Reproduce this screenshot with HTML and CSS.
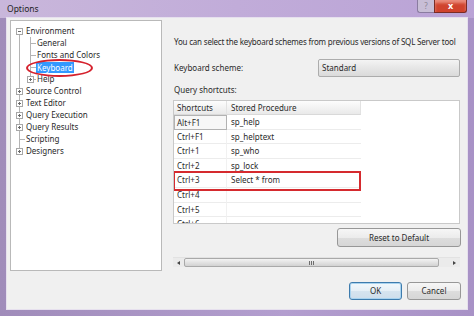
FILE: index.html
```html
<!DOCTYPE html>
<html>
<head>
<meta charset="utf-8">
<link rel="stylesheet" href="styles.css">
</head>
<body>
<div class="window">
  <div class="titlebar">
    <span class="title">Options</span>
    <span class="spacer"></span>
    <span class="cap-help">?</span>
    <span class="cap-close">x</span>
  </div>
  <div class="client">
    <div class="main">
      <div class="tree">
        <div class="node"><span class="g vb"><i class="box minus"></i></span><span class="txt">Environment</span></div>
        <div class="node"><span class="g vf"></span><span class="g vfh"></span><span class="txt">General</span></div>
        <div class="node"><span class="g vf"></span><span class="g vfh"></span><span class="txt">Fonts and Colors</span></div>
        <div class="node"><span class="g vf"></span><span class="g vfh"></span><span class="txt sel">Keyboard</span></div>
        <div class="node"><span class="g vf"></span><span class="g vth"><i class="box plus"></i></span><span class="txt">Help</span></div>
        <div class="node"><span class="g vf"><i class="box plus"></i></span><span class="txt">Source Control</span></div>
        <div class="node"><span class="g vf"><i class="box plus"></i></span><span class="txt">Text Editor</span></div>
        <div class="node"><span class="g vf"><i class="box plus"></i></span><span class="txt">Query Execution</span></div>
        <div class="node"><span class="g vf"><i class="box plus"></i></span><span class="txt">Query Results</span></div>
        <div class="node"><span class="g vfh"></span><span class="txt">Scripting</span></div>
        <div class="node"><span class="g vt"><i class="box plus"></i></span><span class="txt">Designers</span></div>
        <div class="ring"></div>
      </div>
      <div class="pane">
        <div class="desc">You can select the keyboard schemes from previous versions of SQL Server tool</div>
        <div class="scheme-row">
          <span class="lbl">Keyboard scheme:</span>
          <div class="combo">Standard</div>
        </div>
        <div class="lbl qs">Query shortcuts:</div>
        <div class="grid">
          <div class="row head"><div class="c1">Shortcuts</div><div class="c2">Stored Procedure</div></div>
          <div class="row"><div class="c1 cur">Alt+F1</div><div class="c2">sp_help</div></div>
          <div class="row"><div class="c1">Ctrl+F1</div><div class="c2">sp_helptext</div></div>
          <div class="row"><div class="c1">Ctrl+1</div><div class="c2">sp_who</div></div>
          <div class="row"><div class="c1">Ctrl+2</div><div class="c2">sp_lock</div></div>
          <div class="row"><div class="c1">Ctrl+3</div><div class="c2">Select * from</div></div>
          <div class="row"><div class="c1">Ctrl+4</div><div class="c2"></div></div>
          <div class="row"><div class="c1">Ctrl+5</div><div class="c2"></div></div>
          <div class="row"><div class="c1">Ctrl+6</div><div class="c2"></div></div>
          <div class="mark"></div>
        </div>
        <div class="reset-row"><div class="btn reset">Reset to Default</div></div>
        <div class="hscroll">
          <span class="arr"><i class="tri-l"></i></span>
          <span class="thumb"><i class="grip"></i></span>
          <span class="gap"></span>
          <span class="arr"><i class="tri-r"></i></span>
        </div>
      </div>
    </div>
    <div class="footer">
      <div class="btn ok">OK</div>
      <div class="btn cancel">Cancel</div>
    </div>
  </div>
</div>
</body>
</html>
```

FILE: styles.css
```css
* { box-sizing: border-box; }
html, body { margin: 0; padding: 0; }
body {
  width: 474px;
  height: 316px;
  overflow: hidden;
  font-family: "Noto Sans", "Open Sans", sans-serif;
  font-size: 8px;
  color: #2a2a2a;
}
.window {
  width: 474px;
  height: 316px;
  display: flex;
  flex-direction: column;
  background: linear-gradient(to right, #a08cba 0%, #b39ecf 60%, #a892c6 100%);
}
.titlebar {
  height: 18px;
  flex: none;
  display: flex;
  align-items: flex-start;
  padding-left: 7px;
  padding-right: 7px;
  background: linear-gradient(to right, #c9b7db 0%, #c1acd9 50%, #baa3d6 100%);
}
.title {
  line-height: 18px;
  font-size: 8.5px;
  color: #1e1e1e;
}
.spacer { flex: 1; }
.cap-help {
  display: block;
  flex: none;
  width: 17px;
  height: 13px;
  border-left: 1px solid #8a7ca0;
  border-bottom: 1px solid #8a7ca0;
  border-radius: 0 0 0 3px;
  background: #c8bed6;
  color: #8c8597;
  font-size: 8px;
  line-height: 11px;
  text-align: center;
}
.cap-close {
  display: block;
  flex: none;
  width: 33px;
  height: 13px;
  border: 1px solid #7a2c25;
  border-top: 0;
  border-radius: 0 0 3px 0;
  background: #d0432d;
  box-shadow: inset 0 3px 3px rgba(255, 200, 190, 0.55);
  color: #ffffff;
  font-weight: bold;
  font-size: 9px;
  line-height: 11px;
  text-align: center;
}
.client {
  flex: 1;
  margin: 0 7px 7px 7px;
  background: #f0f0f0;
  outline: 1px solid #e6e0ee;
  display: flex;
  flex-direction: column;
}
.main {
  display: flex;
  padding: 2px 0 0 3px;
  height: 253px;
}
.tree {
  position: relative;
  width: 152px;
  height: 251px;
  background: #fff;
  border: 1px solid #b9b9b9;
  padding: 4px 0 0 3px;
}
.node {
  display: flex;
  height: 12px;
  line-height: 12px;
  white-space: nowrap;
}
.g {
  width: 11px;
  height: 12px;
  flex: none;
  display: flex;
  align-items: center;
  justify-content: center;
  background-repeat: no-repeat;
}
.vf { background-image: linear-gradient(#b4b4b4, #b4b4b4); background-position: 5px 0; background-size: 1px 12px; }
.vb { background-image: linear-gradient(#b4b4b4, #b4b4b4); background-position: 5px 6px; background-size: 1px 6px; }
.vt { background-image: linear-gradient(#b4b4b4, #b4b4b4); background-position: 5px 0; background-size: 1px 6px; }
.vfh {
  background-image: linear-gradient(#b4b4b4, #b4b4b4), linear-gradient(#b4b4b4, #b4b4b4);
  background-position: 5px 0, 5px 6px;
  background-size: 1px 12px, 6px 1px;
}
.vth {
  background-image: linear-gradient(#b4b4b4, #b4b4b4), linear-gradient(#b4b4b4, #b4b4b4);
  background-position: 5px 0, 5px 6px;
  background-size: 1px 6px, 6px 1px;
}
.box {
  width: 7px;
  height: 7px;
  border: 1px solid #a7a7a7;
  background-color: #fff;
  background-repeat: no-repeat;
}
.minus {
  background-image: linear-gradient(#6a6a6a, #6a6a6a);
  background-position: 1px 2px;
  background-size: 3px 1px;
}
.plus {
  background-image: linear-gradient(#6a6a6a, #6a6a6a), linear-gradient(#6a6a6a, #6a6a6a);
  background-position: 1px 2px, 2px 1px;
  background-size: 3px 1px, 1px 3px;
}
.txt {
  padding-left: 1px;
  color: #2a2a2a;
}
.txt.sel {
  background: #3399ff;
  color: #fff;
  height: 11px;
  line-height: 11px;
  margin-top: 0.5px;
  padding: 0 1px;
}
.ring {
  position: absolute;
  left: 15px;
  top: 38px;
  width: 67px;
  height: 18px;
  border: 2px solid #d5202c;
  border-radius: 50%;
}
.pane {
  width: 297px;
  margin-left: 3px;
  padding: 16px 2px 0 8px;
  display: flex;
  flex-direction: column;
}
.desc {
  line-height: 12px;
  padding-left: 1px;
  white-space: nowrap;
  letter-spacing: -0.2px;
}
.scheme-row {
  display: flex;
  align-items: center;
  margin-top: 11px;
  height: 18px;
}
.lbl { padding-left: 1px; line-height: 12px; }
.combo {
  margin-left: auto;
  width: 142px;
  height: 18px;
  border: 1px solid #acacac;
  border-radius: 2px;
  background: linear-gradient(#f4f4f4, #e6e6e6 50%, #dadada);
  line-height: 16px;
  padding-left: 3px;
}
.qs { margin-top: 7px; }
.grid {
  position: relative;
  margin-top: 4px;
  height: 124px;
  background: #fff;
  border: 1px solid #c9c9c9;
  overflow: hidden;
}
.row {
  display: flex;
  height: 14.6px;
  line-height: 13.6px;
}
.row .c1 {
  width: 53px;
  padding-left: 3px;
  border-bottom: 1px solid #ececec;
  border-right: 1px solid #f1f1f1;
}
.row .c2 {
  width: 134px;
  padding-left: 4px;
  border-bottom: 1px solid #ececec;
}
.row.head {
  height: 14px;
  line-height: 13px;
}
.row.head .c1, .row.head .c2 {
  background: linear-gradient(#fdfdfd, #f1f1f1 60%, #e9e9e9);
  border-bottom: 1px solid #d9d9d9;
  border-right: 1px solid #e2e2e2;
}
.row.head .c1 { padding-left: 3px; }
.row .c1.cur {
  border: 1px solid #b2b2b2;
  background: #f7f7f7;
  padding-left: 2px;
}
.mark {
  position: absolute;
  left: -1px;
  top: 70px;
  width: 188px;
  height: 20px;
  border: 2px solid #d52a2e;
}
.reset-row {
  display: flex;
  justify-content: flex-end;
  margin-top: 4px;
  margin-right: -1px;
}
.btn {
  height: 19px;
  border: 1px solid #979797;
  border-radius: 3px;
  background: linear-gradient(#f6f6f6, #ececec 50%, #dddddd 51%, #d6d6d6);
  line-height: 17px;
  text-align: center;
  color: #2a2a2a;
}
.reset { width: 124px; }
.hscroll {
  display: flex;
  margin-top: 10px;
  height: 10px;
  background: #ebebeb;
  border-top: 1px solid #e2e2e2;
}
.arr {
  width: 11px;
  display: flex;
  align-items: center;
  justify-content: center;
}
.tri-l, .tri-r {
  width: 0;
  height: 0;
  border-top: 2.5px solid transparent;
  border-bottom: 2.5px solid transparent;
}
.tri-l { border-right: 3px solid #444; }
.tri-r { border-left: 3px solid #444; }
.thumb {
  width: 255px;
  border: 1px solid #a9a9a9;
  border-radius: 2px;
  background: linear-gradient(#f3f3f3, #e2e2e2 50%, #d2d2d2);
  display: flex;
  align-items: center;
  justify-content: center;
}
.grip {
  width: 6px;
  height: 4px;
  background: repeating-linear-gradient(to right, #6e6e6e 0 1px, transparent 1px 2px);
}
.gap { flex: 1; }
.footer {
  display: flex;
  justify-content: flex-end;
  gap: 5px;
  padding: 11px 6px 0 0;
}
.footer .btn { height: 18px; line-height: 16px; }
.ok {
  width: 53px;
  border-color: #3d7bad;
  background: linear-gradient(#f2f8fc, #e6eff6 50%, #d6e4ef 51%, #cfdeeb);
  box-shadow: inset 0 0 0 1px #a9d3ef;
}
.cancel { width: 54px; }
```
